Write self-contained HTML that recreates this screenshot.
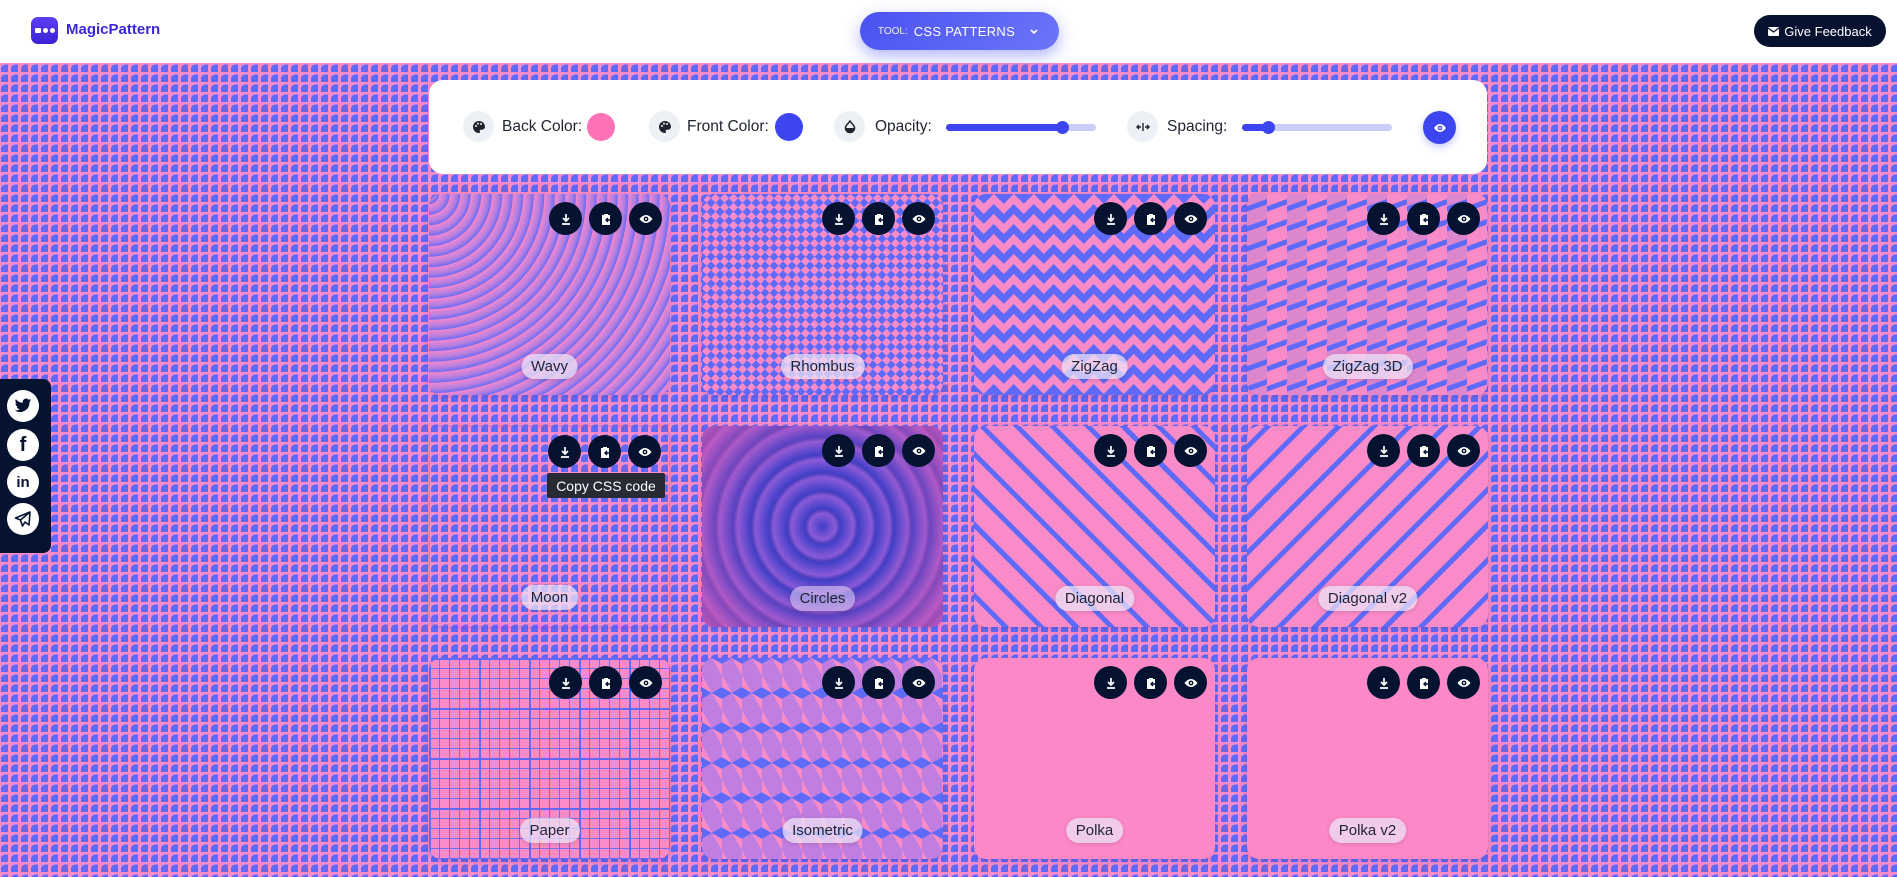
<!DOCTYPE html>
<html><head><meta charset="utf-8"><style>
*{box-sizing:border-box;margin:0;padding:0}
body{width:1897px;height:877px;overflow:hidden;font-family:"Liberation Sans",sans-serif;background:#f98bc8;position:relative}
.hdr{position:absolute;left:0;top:0;width:1897px;height:63px;background:#fff;z-index:2}
.bg{position:absolute;left:0;top:63px;width:1897px;height:814px}
.abs{position:absolute}
.panel{position:absolute;left:429px;top:80px;width:1058px;height:94px;background:#fff;border-radius:14px;z-index:2}
.ic{position:absolute;width:31px;height:31px;border-radius:50%;background:#edf0f5;top:31px;display:flex;align-items:center;justify-content:center}
.lbl{position:absolute;top:38px;font-size:15.5px;color:#1f2430}
.track{position:absolute;top:44px;height:7px;border-radius:4px;background:#c9cdf8}
.fill{position:absolute;left:0;top:0;height:7px;border-radius:4px;background:#3d45f0}
.thumb{position:absolute;top:-3px;width:13px;height:13px;border-radius:50%;background:#3d45f0}
.card{position:absolute;width:241px;height:201px;border-radius:12px;overflow:hidden;box-shadow:0 2px 6px rgba(80,40,120,.25)}
.btn{position:absolute;top:8px;width:33px;height:33px;border-radius:50%;background:#061330;display:flex;align-items:center;justify-content:center}
.b1{right:88px}.b2{right:48px}.b3{right:8px}
.pill{position:absolute;bottom:16px;left:50%;transform:translateX(-50%);padding:4px 10px;border-radius:14px;background:rgba(235,225,245,.75);font-size:15px;color:#1f2434;white-space:nowrap;box-shadow:0 1px 4px rgba(0,0,0,.15)}
.soc{position:absolute;left:7px;width:32px;height:32px;border-radius:50%;background:#fff;display:flex;align-items:center;justify-content:center}
</style></head><body>
<svg width="0" height="0" style="position:absolute"><defs>
<symbol id="dl" viewBox="0 0 14 14"><path d="M7 2v7M4 6l3 3 3-3M3 12h8" stroke="#fff" stroke-width="1.7" fill="none"/></symbol>
<symbol id="cp" viewBox="0 0 14 14"><path d="M3 3h2V2h4v1h2v10H3z" fill="#fff"/><path d="M12 8H7M9 6L7 8l2 2" stroke="#061330" stroke-width="1.4" fill="none"/></symbol>
<symbol id="ey" viewBox="0 0 14 10"><path d="M0.5 5q6.5-8 13 0q-6.5 8-13 0z" fill="#fff"/><circle cx="7" cy="5" r="2.4" fill="#061330"/><circle cx="7" cy="5" r="1" fill="#fff"/></symbol>
</defs></svg>
<div class="hdr">
  <div class="abs" style="left:31px;top:17px;width:27px;height:27px;border-radius:7px;background:linear-gradient(#5b3ff5,#3b22d6);display:flex;align-items:center;justify-content:center;gap:2px">
    <div style="width:6px;height:5px;background:#fff;border-radius:1px"></div><div style="width:5px;height:5px;background:#fff;border-radius:50%"></div><div style="width:5px;height:5px;background:#fff;border-radius:50%"></div>
  </div>
  <div class="abs" style="left:66px;top:21px;font-size:15px;font-weight:bold;color:#3a28d6">MagicPattern</div>
  <div class="abs" style="left:860px;top:12px;width:199px;height:38px;border-radius:19px;background:linear-gradient(135deg,#4a52f1,#6d75fa);box-shadow:0 6px 16px rgba(80,90,240,.45);color:#fff;display:flex;align-items:center;justify-content:center;gap:6px">
    <span style="font-size:10px;opacity:.9">TOOL:</span><span style="font-size:13px;letter-spacing:.3px">CSS PATTERNS</span>
    <svg width="14" height="14" viewBox="0 0 14 14" style="margin-left:6px"><path d="M4 6l3 3 3-3" stroke="#fff" stroke-width="1.6" fill="none"/></svg>
  </div>
  <div class="abs" style="left:1754px;top:15px;width:132px;height:32px;border-radius:16px;background:#06122f;color:#fff;font-size:13px;display:flex;align-items:center;justify-content:center;gap:5px">
    <svg width="11" height="9" viewBox="0 0 11 9"><rect width="11" height="9" rx="1" fill="#fff"/><path d="M0 1l5.5 4L11 1" stroke="#06122f" stroke-width="1.3" fill="none"/></svg>Give Feedback
  </div>
</div>
<svg class="bg" width="1897" height="814"><defs><pattern id="p" width="10" height="10" patternUnits="userSpaceOnUse"><rect width="10" height="10" fill="#f98bc8"/><path d="M1 9V5.5C1 3.5 3 1.5 5 1.5H8V9Z" fill="#5f6af8"/></pattern></defs><rect width="1897" height="814" fill="url(#p)"/></svg>

<div class="panel">
  <div class="ic" style="left:34px"><svg width="14" height="14" viewBox="0 0 14 14"><path d="M7 1a6 6 0 000 12c1 0 1.3-.8.8-1.5-.5-.8 0-1.7 1-1.7H10a3 3 0 003-3C13 3.5 10.3 1 7 1z" fill="#1f2430"/><circle cx="4" cy="6" r="1" fill="#edf0f5"/><circle cx="6" cy="3.6" r="1" fill="#edf0f5"/><circle cx="9" cy="4" r="1" fill="#edf0f5"/></svg></div>
  <div class="lbl" style="left:73px">Back Color:</div>
  <div class="abs" style="left:158px;top:33px;width:28px;height:28px;border-radius:50%;background:#ff72b7"></div>
  <div class="ic" style="left:220px"><svg width="14" height="14" viewBox="0 0 14 14"><path d="M7 1a6 6 0 000 12c1 0 1.3-.8.8-1.5-.5-.8 0-1.7 1-1.7H10a3 3 0 003-3C13 3.5 10.3 1 7 1z" fill="#1f2430"/><circle cx="4" cy="6" r="1" fill="#edf0f5"/><circle cx="6" cy="3.6" r="1" fill="#edf0f5"/><circle cx="9" cy="4" r="1" fill="#edf0f5"/></svg></div>
  <div class="lbl" style="left:258px">Front Color:</div>
  <div class="abs" style="left:346px;top:33px;width:28px;height:28px;border-radius:50%;background:#3d45f0"></div>
  <div class="ic" style="left:405px"><svg width="12" height="14" viewBox="0 0 12 14"><path d="M6 1L2 6a4.5 4.5 0 108 0z" fill="none" stroke="#1f2430" stroke-width="1.5"/><path d="M1.7 8h8.6a4.3 4.3 0 01-8.6 0z" fill="#1f2430"/></svg></div>
  <div class="lbl" style="left:446px">Opacity:</div>
  <div class="track" style="left:517px;width:150px"><div class="fill" style="width:118px"></div><div class="thumb" style="left:110px"></div></div>
  <div class="ic" style="left:698px"><svg width="14" height="10" viewBox="0 0 14 10"><path d="M7 1v8M1 5h4M9 5h4M3 3l-2 2 2 2M11 3l2 2-2 2" stroke="#1f2430" stroke-width="1.4" fill="none"/></svg></div>
  <div class="lbl" style="left:738px">Spacing:</div>
  <div class="track" style="left:813px;width:150px"><div class="fill" style="width:28px"></div><div class="thumb" style="left:20px"></div></div>
  <div class="abs" style="left:994px;top:31px;width:33px;height:33px;border-radius:50%;background:#3d45f0;display:flex;align-items:center;justify-content:center;box-shadow:0 3px 8px rgba(60,70,240,.3)"><svg width="14" height="10" viewBox="0 0 14 10"><path d="M1 5q6-8 12 0q-6 8-12 0z" fill="#fff"/><circle cx="7" cy="5" r="2.3" fill="#3d45f0"/><circle cx="7" cy="5" r="1" fill="#fff"/></svg></div>
</div>

<div class="abs" style="left:0;top:379px;width:51px;height:174px;background:#061330;border-radius:0 8px 8px 0;z-index:2">
  <div class="soc" style="top:11px"><svg width="18" height="16" viewBox="0 0 24 20"><path d="M23 2.3a9 9 0 01-2.6.7A4.6 4.6 0 0022.4.5a9 9 0 01-2.9 1.1A4.5 4.5 0 0011.8 5.7 12.8 12.8 0 012.5 1a4.5 4.5 0 001.4 6 4.5 4.5 0 01-2-.6 4.5 4.5 0 003.6 4.5 4.5 4.5 0 01-2 .1 4.5 4.5 0 004.2 3.1A9 9 0 011 16a12.8 12.8 0 0019.7-11.4A9 9 0 0023 2.3z" fill="#061330"/></svg></div>
  <div class="soc" style="top:50px;font-weight:bold;font-size:20px;color:#061330">f</div>
  <div class="soc" style="top:87px;font-weight:bold;font-size:15px;color:#061330">in</div>
  <div class="soc" style="top:124px"><svg width="18" height="18" viewBox="0 0 18 18"><path d="M16 2L1.5 8l5 2 2 6 2.5-4 4 3z M6.5 10L16 2" fill="none" stroke="#061330" stroke-width="1.6" stroke-linejoin="round"/></svg></div>
</div>

<div class="card" style="left:429px;top:194px;background:repeating-radial-gradient(circle at 0 0,#f087cf 0,#b57fe0 6px,#6f6cf2 10px,#f087cf 10.5px);">
 <div class="btn b1"><svg width="14" height="14"><use href="#dl"/></svg></div><div class="btn b2"><svg width="14" height="14"><use href="#cp"/></svg></div><div class="btn b3"><svg width="14" height="10"><use href="#ey"/></svg></div><div class="pill">Wavy</div></div>
<div class="card" style="left:702px;top:194px;background-image:linear-gradient(45deg,#5f6af8 25%,transparent 25%,transparent 75%,#5f6af8 75%),linear-gradient(-45deg,#5f6af8 25%,transparent 25%,transparent 75%,#5f6af8 75%);background-size:9px 9px;background-color:#f98bc8">
 <div class="btn b1"><svg width="14" height="14"><use href="#dl"/></svg></div><div class="btn b2"><svg width="14" height="14"><use href="#cp"/></svg></div><div class="btn b3"><svg width="14" height="10"><use href="#ey"/></svg></div><div class="pill">Rhombus</div></div>
<div class="card" style="left:974px;top:194px;background-color:#f98bc8;background-image:linear-gradient(135deg,#5f6af8 25%,transparent 25%),linear-gradient(225deg,#5f6af8 25%,transparent 25%),linear-gradient(45deg,#5f6af8 25%,transparent 25%),linear-gradient(315deg,#5f6af8 25%,#f98bc8 25%);background-position:10px 0,10px 0,0 0,0 0;background-size:20px 20px">
 <div class="btn b1"><svg width="14" height="14"><use href="#dl"/></svg></div><div class="btn b2"><svg width="14" height="14"><use href="#cp"/></svg></div><div class="btn b3"><svg width="14" height="10"><use href="#ey"/></svg></div><div class="pill">ZigZag</div></div>
<div class="card" style="left:1247px;top:194px;background-color:#f98bc8;background-image:linear-gradient(160deg,transparent 45%,#5f6af8 45%,#5f6af8 65%,transparent 65%),linear-gradient(90deg,rgba(200,130,210,.6) 50%,transparent 50%);background-size:20px 20px,40px 20px">
 <div class="btn b1"><svg width="14" height="14"><use href="#dl"/></svg></div><div class="btn b2"><svg width="14" height="14"><use href="#cp"/></svg></div><div class="btn b3"><svg width="14" height="10"><use href="#ey"/></svg></div><div class="pill">ZigZag 3D</div></div>

<div class="card" style="left:429px;top:426px;background:transparent;box-shadow:0 1px 4px rgba(80,40,120,.25);border:1px solid rgba(150,90,220,.35)">
 <div class="btn b1"><svg width="14" height="14"><use href="#dl"/></svg></div><div class="btn b2"><svg width="14" height="14"><use href="#cp"/></svg></div><div class="btn b3"><svg width="14" height="10"><use href="#ey"/></svg></div><div class="pill">Moon</div></div>
<div class="card" style="left:702px;top:426px;background:repeating-radial-gradient(circle at 50% 50%,#3f3fc8 0,#8a5ad8 13px,#4a3fbf 17px,#4a3fbf 18px);">
 <div class="abs" style="inset:0;background:radial-gradient(circle,transparent 45%,rgba(240,90,170,.6) 100%)"></div>
 <div class="btn b1"><svg width="14" height="14"><use href="#dl"/></svg></div><div class="btn b2"><svg width="14" height="14"><use href="#cp"/></svg></div><div class="btn b3"><svg width="14" height="10"><use href="#ey"/></svg></div><div class="pill" style="background:rgba(220,200,240,.6)">Circles</div></div>
<div class="card" style="left:974px;top:426px;background:repeating-linear-gradient(45deg,#f98bc8 0,#f98bc8 20px,#5f6af8 20px,#5f6af8 25px)">
 <div class="btn b1"><svg width="14" height="14"><use href="#dl"/></svg></div><div class="btn b2"><svg width="14" height="14"><use href="#cp"/></svg></div><div class="btn b3"><svg width="14" height="10"><use href="#ey"/></svg></div><div class="pill">Diagonal</div></div>
<div class="card" style="left:1247px;top:426px;background:repeating-linear-gradient(-45deg,#f98bc8 0,#f98bc8 20px,#5f6af8 20px,#5f6af8 25px)">
 <div class="btn b1"><svg width="14" height="14"><use href="#dl"/></svg></div><div class="btn b2"><svg width="14" height="14"><use href="#cp"/></svg></div><div class="btn b3"><svg width="14" height="10"><use href="#ey"/></svg></div><div class="pill">Diagonal v2</div></div>

<div class="card" style="left:429px;top:658px;background-color:#f98bc8;background-image:linear-gradient(#5f6af8 2px,transparent 2px),linear-gradient(90deg,#5f6af8 2px,transparent 2px),linear-gradient(#6f70f0 1px,transparent 1px),linear-gradient(90deg,#6f70f0 1px,transparent 1px);background-size:50px 50px,50px 50px,10px 10px,10px 10px">
 <div class="btn b1"><svg width="14" height="14"><use href="#dl"/></svg></div><div class="btn b2"><svg width="14" height="14"><use href="#cp"/></svg></div><div class="btn b3"><svg width="14" height="10"><use href="#ey"/></svg></div><div class="pill">Paper</div></div>
<div class="card" style="left:702px;top:658px;background-color:#c07ee0;background-image:linear-gradient(30deg,#5f6af8 12%,transparent 12.5%,transparent 87%,#5f6af8 87.5%,#5f6af8),linear-gradient(150deg,#5f6af8 12%,transparent 12.5%,transparent 87%,#5f6af8 87.5%,#5f6af8),linear-gradient(60deg,#f98bc8 25%,transparent 25.5%,transparent 75%,#f98bc8 75%,#f98bc8);background-size:20px 35px">
 <div class="btn b1"><svg width="14" height="14"><use href="#dl"/></svg></div><div class="btn b2"><svg width="14" height="14"><use href="#cp"/></svg></div><div class="btn b3"><svg width="14" height="10"><use href="#ey"/></svg></div><div class="pill">Isometric</div></div>
<div class="card" style="left:974px;top:658px;background:#fd88c8">
 <div class="btn b1"><svg width="14" height="14"><use href="#dl"/></svg></div><div class="btn b2"><svg width="14" height="14"><use href="#cp"/></svg></div><div class="btn b3"><svg width="14" height="10"><use href="#ey"/></svg></div><div class="pill">Polka</div></div>
<div class="card" style="left:1247px;top:658px;background:#fd88c8">
 <div class="btn b1"><svg width="14" height="14"><use href="#dl"/></svg></div><div class="btn b2"><svg width="14" height="14"><use href="#cp"/></svg></div><div class="btn b3"><svg width="14" height="10"><use href="#ey"/></svg></div><div class="pill">Polka v2</div></div>

<div class="abs" style="left:547px;top:473px;width:118px;height:25px;background:#262b36;color:#fff;font-size:14px;display:flex;align-items:center;justify-content:center;border-radius:2px;z-index:3">Copy CSS code</div>
</body></html>
